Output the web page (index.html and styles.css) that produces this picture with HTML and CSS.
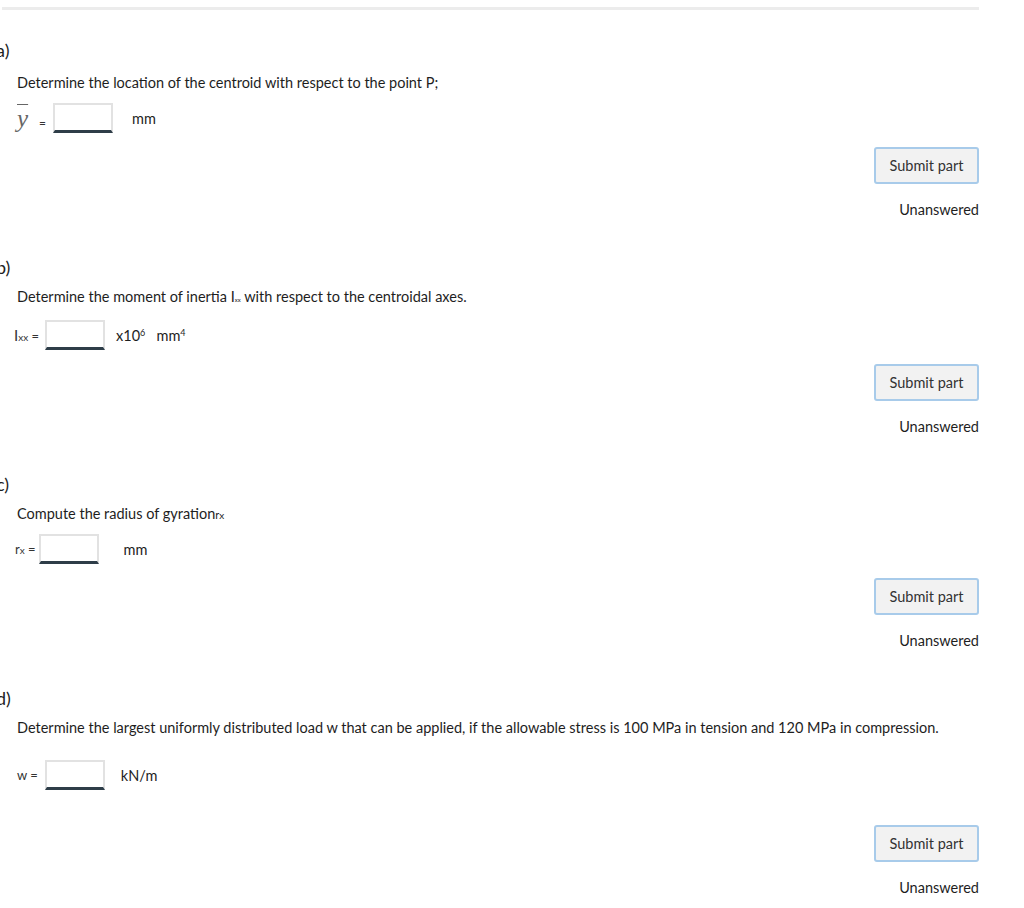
FILE: index.html
```html
<!DOCTYPE html>
<html>
<head>
<meta charset="utf-8">
<link rel="stylesheet" href="styles.css">
</head>
<body>
<div class="page">
  <div class="rule"></div>

  <section class="part part-a">
    <div class="label">a)</div>
    <p class="question">Determine the location of the centroid with respect to the point P;</p>
    <div class="answer">
      <span class="var"><span class="ybar">y</span>=</span>
      <span class="box"></span>
      <span class="unit">mm</span>
    </div>
    <div class="submit-area">
      <button class="submit">Submit part</button>
      <div class="status">Unanswered</div>
    </div>
  </section>

  <section class="part part-b">
    <div class="label">b)</div>
    <p class="question">Determine the moment of inertia I<span class="tiny">xx</span> with respect to the centroidal axes.</p>
    <div class="answer">
      <span class="var small"><span class="bigI">I</span><sub>xx</sub>&nbsp;=</span>
      <span class="box"></span>
      <span class="unit">x10<sup>6</sup>&nbsp;&nbsp; mm<sup>4</sup></span>
    </div>
    <div class="submit-area">
      <button class="submit">Submit part</button>
      <div class="status">Unanswered</div>
    </div>
  </section>

  <section class="part part-c">
    <div class="label">c)</div>
    <p class="question">Compute the radius of gyration<span class="small-r">r<span class="lowx">x</span></span></p>
    <div class="answer">
      <span class="var small">r<sub>x</sub>&nbsp;=</span>
      <span class="box"></span>
      <span class="unit">mm</span>
    </div>
    <div class="submit-area">
      <button class="submit">Submit part</button>
      <div class="status">Unanswered</div>
    </div>
  </section>

  <section class="part part-d">
    <div class="label">d)</div>
    <p class="question">Determine the largest uniformly distributed load w that can be applied, if the allowable stress is 100 MPa in tension and 120 MPa in compression.</p>
    <div class="answer">
      <span class="var wvar">w&nbsp;=</span>
      <span class="box"></span>
      <span class="unit">kN/m</span>
    </div>
    <div class="submit-area">
      <button class="submit">Submit part</button>
      <div class="status">Unanswered</div>
    </div>
  </section>
</div>
</body>
</html>
```

FILE: styles.css
```css
* { box-sizing: border-box; }
html, body { margin: 0; padding: 0; background: #fff; }
body {
  font-family: "Lato", "Open Sans", sans-serif;
  color: #1e1e1e;
  font-size: 14.5px;
}
.page {
  width: 979px;
  padding-left: 17px;
  padding-top: 7px;
}
.rule {
  height: 3px;
  background: #ececec;
  margin-left: -15px;
}
.label {
  font-size: 18px;
  margin-left: -21px;
  line-height: 22px;
}
.part-a .label { margin-top: 29px; }
.part-b .label, .part-c .label, .part-d .label { margin-top: 36px; }
.question {
  margin: 0;
  line-height: 20px;
}
.part-a .question { margin-top: 12px; }
.part-b .question, .part-c .question, .part-d .question { margin-top: 9px; }
.tiny { font-size: 6px; }
.small-r { font-size: 11px; line-height: 0; }
.lowx { font-size: 10px; line-height: 0; }
.answer {
  display: flex;
  align-items: center;
  height: 30px;
  margin-top: 10px;
}
.part-d .answer { margin-top: 22px; }
.var {
  font-size: 12px;
  display: inline-flex;
  align-items: baseline;
  color: #333;
}
.var.small { font-size: 13px; }
.var.small sub { font-size: 10px; }
.bigI { font-size: 15px; }
.var.wvar { font-size: 13px; }
.part-b .var { margin-left: -3px; }
.part-c .var { margin-left: -2px; }
.ybar {
  font-family: "Liberation Serif", "DejaVu Serif", serif;
  font-style: italic;
  font-size: 25px;
  text-decoration: overline;
  text-decoration-thickness: 1px;
  margin-right: 10px;
  padding-right: 1px;
  color: #666;
  line-height: 1;
}
.box {
  width: 60px;
  height: 30px;
  border: 2px solid #e2e2e2;
  border-bottom: 3px solid #2e3d48;
  margin-left: 7px;
  background: #fff;
}
.part-b .box { margin-left: 6px; }
.part-c .box { margin-left: 3px; }
.unit {
  margin-left: 19px;
  font-size: 14.5px;
}
.part-b .unit { margin-left: 11px; }
.part-c .unit { margin-left: 25px; }
.part-d .unit { margin-left: 16px; }
sup { font-size: 9px; vertical-align: 5px; line-height: 0; }
sub { font-size: 9px; vertical-align: -3px; line-height: 0; }
.submit-area {
  display: flex;
  flex-direction: column;
  align-items: flex-end;
  margin-top: 14px;
}
.part-d .submit-area { margin-top: 35px; }
.submit {
  font-family: inherit;
  font-size: 14.5px;
  color: #333;
  background: #f2f2f2;
  border: 2px solid #a8cbea;
  border-radius: 3px;
  width: 105px;
  height: 37px;
  padding: 0;
}
.status {
  margin-top: 16px;
  font-size: 14.5px;
  line-height: 20px;
}
```
